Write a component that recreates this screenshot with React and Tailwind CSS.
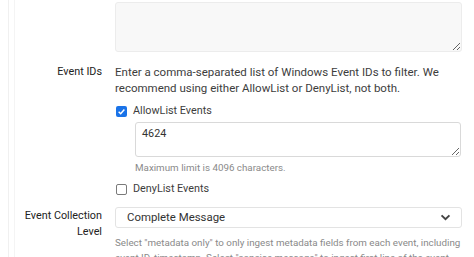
import React from 'react';

const Check = ({ checked }) =>
    checked ? (
        <span className="flex h-[11px] w-[11px] items-center justify-center rounded-[2px] bg-[#1a73e8]">
            <svg viewBox="0 0 12 12" className="h-[9px] w-[9px]">
                <polyline points="2.2,6.3 4.9,8.9 9.8,3.2" fill="none" stroke="white" strokeWidth="2" />
            </svg>
        </span>
    ) : (
        <span className="block h-[11px] w-[11px] rounded-[2px] border border-[#7a7a7a] bg-white" />
    );

const App = () => {
    return (
        <div className="flex h-[257px] w-[474px] overflow-hidden bg-white font-['Roboto',sans-serif] font-normal text-[#333]">
            {/* faint page rails */}
            <div className="w-[8px]" />
            <div className="w-[6px] border-l border-[#f0f0f0]" />
            <div className="flex-1 border-l border-[#f4f4f4] pr-[12px]">
                <div className="grid grid-cols-[87px_1fr] gap-x-[13px]">
                    {/* previous field textarea */}
                    <div />
                    <textarea
                        readOnly
                        className="mt-[2px] block h-[50px] w-full rounded-[3px] border border-[#ececec] bg-[#f8f8f8] outline-none"
                    />

                    {/* Event IDs */}
                    <div className="mt-[12px] text-right text-[10.8px] leading-[16px] text-[#222]">Event IDs</div>
                    <div className="mt-[12px]">
                        <p className="text-[11.5px] leading-[16px] text-[#3d3d3d]">
                            Enter a comma-separated list of Windows Event IDs to filter. We recommend using either AllowList or DenyList, not both.
                        </p>
                        <div className="mt-[7px] flex h-[16px] items-center gap-[6px] pl-[1px] text-[10.8px] text-[#3d3d3d]">
                            <Check checked />
                            <span>AllowList Events</span>
                        </div>
                        <div className="ml-[20px] mt-[3px]">
                            <textarea
                                readOnly
                                value="4624"
                                className="block h-[35px] w-[326px] rounded-[3px] border border-[#d9d9d9] bg-white px-[6px] pt-[3px] text-[10.8px] leading-[16px] text-[#333] outline-none"
                            />
                            <p className="mt-[3px] text-[9.8px] leading-[16px] text-[#8a8a8a]">Maximum limit is 4096 characters.</p>
                        </div>
                        <div className="mt-[5px] flex h-[16px] items-center gap-[6px] pl-[1px] text-[10.8px] text-[#3d3d3d]">
                            <Check checked={false} />
                            <span>DenyList Events</span>
                        </div>
                    </div>

                    {/* Event Collection Level */}
                    <div className="mt-[10px] pt-[1px] pl-[6px] text-right text-[10.8px] leading-[16px] text-[#222]">
                        Event Collection Level
                    </div>
                    <div className="mt-[10px]">
                        <div className="flex h-[21px] items-center justify-between rounded-[3px] border border-[#e3e3e3] bg-white pl-[11px] pr-[10px]">
                            <span className="text-[11.4px] text-[#333]">Complete Message</span>
                            <svg viewBox="0 0 12 8" className="h-[7px] w-[11px]">
                                <polyline points="1.5,1.5 6,6 10.5,1.5" fill="none" stroke="#444" strokeWidth="2.2" />
                            </svg>
                        </div>
                        <p className="mt-[7px] text-[9.8px] leading-[15px] text-[#8a8a8a]">
                            Select "metadata only" to only ingest metadata fields from each event, including event ID, timestamp. Select "concise message" to ingest first line of the event message.
                        </p>
                    </div>
                </div>
            </div>
        </div>
    );
};

export default App;
